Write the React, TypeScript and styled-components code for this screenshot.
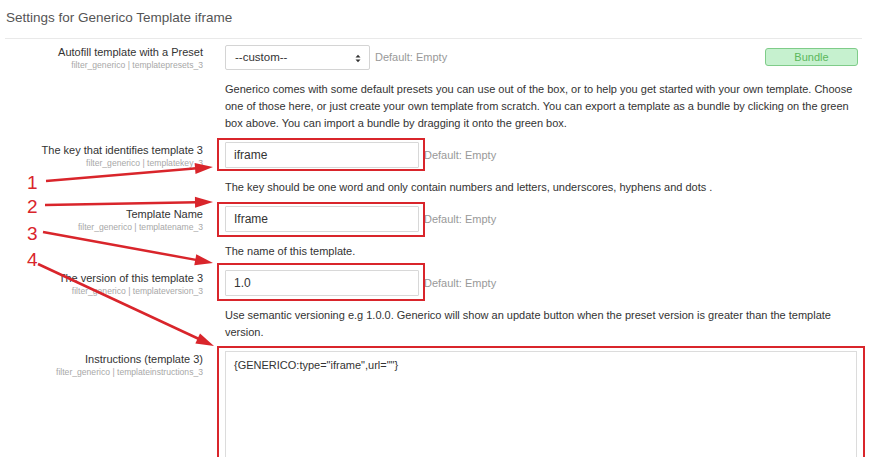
import React from 'react';
import styled, { createGlobalStyle } from 'styled-components';

const GlobalStyle = createGlobalStyle`
  body {
    margin: 0;
    background: #fff;
    font-family: "Liberation Sans", Arial, sans-serif;
    color: #333;
  }
`;

const Page = styled.div`
  position: relative;
  width: 870px;
  height: 457px;
  overflow: hidden;
  background: #fff;
`;

const Title = styled.h3`
  margin: 0;
  padding: 9px 0 0 6px;
  font-size: 13.5px;
  font-weight: normal;
  line-height: 17px;
  color: #555;
`;

const Divider = styled.hr`
  margin: 12px 8px 0 5px;
  border: 0;
  border-top: 1px solid #e9e9e9;
`;

const Form = styled.div`
  margin-top: 5px;
`;

const Setting = styled.div`
  display: grid;
  grid-template-columns: 197px 633px;
  column-gap: 22px;
  padding-left: 6px;
  margin-bottom: 10px;
`;

const LabelCell = styled.div`
  text-align: right;
  padding-top: 1px;
`;

const LabelText = styled.div`
  font-size: 11px;
  line-height: 14px;
  color: #333;
`;

const SubText = styled.div`
  font-size: 8.6px;
  line-height: 12px;
  color: #a8a8a8;
`;

const FieldCell = styled.div`
  display: flex;
  flex-direction: column;
`;

const ControlRow = styled.div`
  display: flex;
  align-items: center;
  height: 26px;
`;

const SelectBox = styled.div`
  position: relative;
  width: 145px;
  height: 25px;
  box-sizing: border-box;
  border: 1px solid #d4d4d4;
  border-radius: 2px;
  background: #fff;
  display: flex;
  align-items: center;
  padding: 0 9px;
  font-size: 11.5px;
  color: #333;
`;

const SelectArrows = styled.svg`
  position: absolute;
  right: 8px;
  top: 8px;
`;

const Highlight = styled.div<{ $top: number; $bottom: number; $left: number; $right: number }>`
  position: relative;
  display: flex;
  &::after {
    content: '';
    position: absolute;
    top: -${(p) => p.$top}px;
    bottom: -${(p) => p.$bottom}px;
    left: -${(p) => p.$left}px;
    right: -${(p) => p.$right}px;
    border: 2.5px solid #d9252b;
    pointer-events: none;
  }
`;

const TextInput = styled.input`
  width: 194px;
  height: 26px;
  box-sizing: border-box;
  border: 1px solid #d8d8d8;
  border-radius: 1px;
  padding: 0 8px;
  font-family: "Liberation Sans", Arial, sans-serif;
  font-size: 12px;
  color: #333;
  outline: none;
`;

const TextArea = styled.textarea`
  width: 632px;
  height: 140px;
  box-sizing: border-box;
  border: 1px solid #dcdcdc;
  padding: 6px 8px;
  font-family: "Liberation Sans", Arial, sans-serif;
  font-size: 11px;
  line-height: 14px;
  color: #333;
  resize: none;
  outline: none;
`;

const DefaultNote = styled.span`
  margin-left: 5px;
  font-size: 11px;
  color: #999;
`;

const BundleButton = styled.div`
  margin-left: auto;
  width: 93px;
  height: 18px;
  box-sizing: border-box;
  border: 1px solid #7fcc89;
  border-radius: 3px;
  background: #c6f1cf;
  color: #5cb85c;
  font-size: 11px;
  display: flex;
  align-items: center;
  justify-content: center;
`;

const Description = styled.div`
  margin-top: 11px;
  font-size: 11px;
  line-height: 17px;
  color: #333;
`;

const Overlay = styled.svg`
  position: absolute;
  top: 0;
  left: 0;
  pointer-events: none;
`;

const Number = styled.text`
  font-family: "Liberation Sans", Arial, sans-serif;
  font-size: 19px;
  fill: #d9252b;
`;

const arrows = [
  { n: '1', ny: 189, x1: 46, y1: 181, x2: 213, y2: 167 },
  { n: '2', ny: 213, x1: 45, y1: 205, x2: 213, y2: 202 },
  { n: '3', ny: 240, x1: 43, y1: 232, x2: 213, y2: 263 },
  { n: '4', ny: 266, x1: 38, y1: 264, x2: 214, y2: 346 },
];

function Arrow({ x1, y1, x2, y2 }: { x1: number; y1: number; x2: number; y2: number }) {
  const dx = x2 - x1;
  const dy = y2 - y1;
  const len = Math.sqrt(dx * dx + dy * dy);
  const ux = dx / len;
  const uy = dy / len;
  const bx = x2 - ux * 18;
  const by = y2 - uy * 18;
  const pts = `${x2},${y2} ${bx - uy * 5.5},${by + ux * 5.5} ${bx + uy * 5.5},${by - ux * 5.5}`;
  return (
    <g>
      <line x1={x1} y1={y1} x2={bx + ux * 2} y2={by + uy * 2} stroke="#d9252b" strokeWidth={2.5} />
      <polygon points={pts} fill="#d9252b" />
    </g>
  );
}

export default function App() {
  return (
    <Page>
      <GlobalStyle />
      <Title>Settings for Generico Template iframe</Title>
      <Divider />
      <Form>
        <Setting>
          <LabelCell>
            <LabelText>Autofill template with a Preset</LabelText>
            <SubText>filter_generico | templatepresets_3</SubText>
          </LabelCell>
          <FieldCell>
            <ControlRow>
              <SelectBox>
                --custom--
                <SelectArrows width="6" height="9" viewBox="0 0 6 9">
                  <path d="M0.5 3.5 L3 0.8 L5.5 3.5 Z M0.5 5.5 L3 8.2 L5.5 5.5 Z" fill="#333" />
                </SelectArrows>
              </SelectBox>
              <DefaultNote>Default: Empty</DefaultNote>
              <BundleButton>Bundle</BundleButton>
            </ControlRow>
            <Description>
              Generico comes with some default presets you can use out of the box, or to help you get started with your own template. Choose one of those here, or just create your own template from scratch. You can export a template as a bundle by clicking on the green box above. You can import a bundle by dragging it onto the green box.
            </Description>
          </FieldCell>
        </Setting>

        <Setting>
          <LabelCell>
            <LabelText>The key that identifies template 3</LabelText>
            <SubText>filter_generico | templatekey_3</SubText>
          </LabelCell>
          <FieldCell>
            <ControlRow>
              <Highlight $top={4} $bottom={3} $left={8} $right={6}>
                <TextInput defaultValue="iframe" />
              </Highlight>
              <DefaultNote>Default: Empty</DefaultNote>
            </ControlRow>
            <Description>
              The key should be one word and only contain numbers and letters, underscores, hyphens and dots .
            </Description>
          </FieldCell>
        </Setting>

        <Setting>
          <LabelCell>
            <LabelText>Template Name</LabelText>
            <SubText>filter_generico | templatename_3</SubText>
          </LabelCell>
          <FieldCell>
            <ControlRow>
              <Highlight $top={4} $bottom={5} $left={8} $right={6}>
                <TextInput defaultValue="Iframe" />
              </Highlight>
              <DefaultNote>Default: Empty</DefaultNote>
            </ControlRow>
            <Description>The name of this template.</Description>
          </FieldCell>
        </Setting>

        <Setting>
          <LabelCell>
            <LabelText>The version of this template 3</LabelText>
            <SubText>filter_generico | templateversion_3</SubText>
          </LabelCell>
          <FieldCell>
            <ControlRow>
              <Highlight $top={7} $bottom={5} $left={8} $right={6}>
                <TextInput defaultValue="1.0" />
              </Highlight>
              <DefaultNote>Default: Empty</DefaultNote>
            </ControlRow>
            <Description>
              Use semantic versioning e.g 1.0.0. Generico will show an update button when the preset version is greater than the template version.
            </Description>
          </FieldCell>
        </Setting>

        <Setting>
          <LabelCell>
            <LabelText>Instructions (template 3)</LabelText>
            <SubText>filter_generico | templateinstructions_3</SubText>
          </LabelCell>
          <FieldCell>
            <Highlight $top={5} $bottom={5} $left={8} $right={7}>
              <TextArea defaultValue={'{GENERICO:type="iframe",url=""}'} />
            </Highlight>
          </FieldCell>
        </Setting>
      </Form>

      <Overlay width="870" height="457" viewBox="0 0 870 457">
        {arrows.map((a) => (
          <g key={a.n}>
            <Number x={27} y={a.ny}>{a.n}</Number>
            <Arrow x1={a.x1} y1={a.y1} x2={a.x2} y2={a.y2} />
          </g>
        ))}
      </Overlay>
    </Page>
  );
}
